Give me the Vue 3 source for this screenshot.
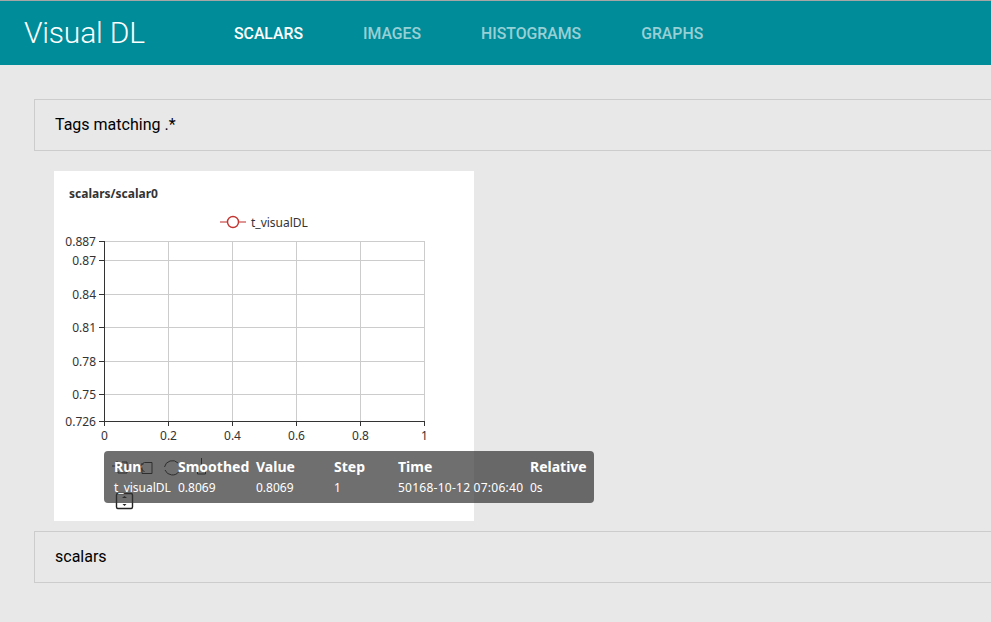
<template>
  <div class="page">
    <header class="topbar">
      <div class="logo">Visual DL</div>
      <nav class="nav">
        <a
          v-for="item in navItems"
          :key="item"
          class="nav-item"
          :class="{ active: item === 'SCALARS' }"
        >{{ item }}</a>
      </nav>
    </header>

    <main class="content">
      <div class="panel">Tags matching .*</div>

      <section class="card">
        <div class="card-title">scalars/scalar0</div>
        <svg class="chart" width="420" height="350" viewBox="0 0 420 350">
          <!-- legend -->
          <line x1="166" y1="51" x2="192" y2="51" stroke="#c23531" stroke-width="1.5" opacity="0.7" />
          <circle cx="179" cy="51" r="5.5" fill="#fff" stroke="#c23531" stroke-width="1.4" />
          <text x="197" y="56" class="legend">t_visualDL</text>

          <!-- grid -->
          <line
            v-for="x in xTicks"
            :key="'gx' + x.label"
            :x1="x.pos" y1="70" :x2="x.pos" y2="250"
            stroke="#ccc"
          />
          <line
            v-for="y in yTicks"
            :key="'gy' + y.label"
            x1="50" :y1="y.pos" x2="370" :y2="y.pos"
            stroke="#ccc"
          />

          <!-- axes -->
          <line x1="50.5" y1="70" x2="50.5" y2="250" stroke="#333" />
          <line x1="50" y1="250.5" x2="371" y2="250.5" stroke="#333" />
          <line
            v-for="y in yTicks"
            :key="'ty' + y.label"
            x1="45" :y1="y.pos" x2="50" :y2="y.pos"
            stroke="#333"
          />
          <line
            v-for="x in xTicks"
            :key="'tx' + x.label"
            :x1="x.pos" y1="250" :x2="x.pos" y2="255"
            stroke="#333"
          />
          <text
            v-for="y in yTicks"
            :key="'ly' + y.label"
            x="42" :y="y.pos + 4"
            text-anchor="end"
            class="tick"
          >{{ y.label }}</text>
          <text
            v-for="x in xTicks"
            :key="'lx' + x.label"
            :x="x.pos" y="269"
            text-anchor="middle"
            class="tick"
          >{{ x.label }}</text>

          <!-- toolbox, sits under the tooltip -->
          <g fill="none" stroke="#222" stroke-width="1">
            <path d="M58 295h10M63 290v10M68 291h5v11h-9v-2" />
            <path d="M85.500 296l5-5M85.500 296l5 5M87 293h2.500M90.500 291.500h7.500v11h-10v-6" />
            <path d="M124 292a8 8 0 0 0-13.500 4M111 299a8 8 0 0 0 14 1.500" />
            <path d="M143.500 296v7h8v-7M147.500 287v12" />
          </g>
          <rect x="62.500" y="322.500" width="16" height="15" rx="1.500" fill="#fff" stroke="#222" stroke-width="1.4" />
          <path d="M68 327h5l-2.500-2zM68.500 333h4l-2 2z" fill="#222" />
        </svg>

        <div class="tooltip">
          <table>
            <tr>
              <th v-for="col in tooltipHead" :key="col">{{ col }}</th>
            </tr>
            <tr>
              <td v-for="(cell, i) in tooltipRow" :key="i">{{ cell }}</td>
            </tr>
          </table>
        </div>
      </section>

      <div class="panel">scalars</div>
    </main>
  </div>
</template>

<script setup>
const navItems = ['SCALARS', 'IMAGES', 'HISTOGRAMS', 'GRAPHS']

const xTicks = [
  { label: '0', pos: 50.5 },
  { label: '0.2', pos: 114.5 },
  { label: '0.4', pos: 178.5 },
  { label: '0.6', pos: 242.5 },
  { label: '0.8', pos: 306.5 },
  { label: '1', pos: 370.5 }
]

const yTicks = [
  { label: '0.887', pos: 70.5 },
  { label: '0.87', pos: 89.5 },
  { label: '0.84', pos: 123.5 },
  { label: '0.81', pos: 156.5 },
  { label: '0.78', pos: 190.5 },
  { label: '0.75', pos: 223.5 },
  { label: '0.726', pos: 250.5 }
]

const tooltipHead = ['Run', 'Smoothed', 'Value', 'Step', 'Time', 'Relative']
const tooltipRow = ['t_visualDL', '0.8069', '0.8069', '1', '50168-10-12 07:06:40', '0s']
</script>

<style scoped>
.page {
  width: 991px;
  height: 622px;
  overflow: hidden;
  background: #e8e8e8;
  font-family: Roboto, "Liberation Sans", sans-serif;
}

.topbar {
  height: 64px;
  border-top: 1px solid #a6a6a6;
  background: #008c99;
  display: flex;
  align-items: center;
}

.logo {
  width: 234px;
  padding-left: 24px;
  padding-bottom: 2px;
  box-sizing: border-box;
  font-size: 30px;
  font-weight: 300;
  color: #fff;
  letter-spacing: -0.2px;
}

.nav {
  display: flex;
  gap: 60px;
}

.nav-item {
  font-size: 15.800px;
  font-weight: 500;
  color: rgba(255, 255, 255, 0.6);
}

.nav-item.active {
  color: #fff;
}

.content {
  padding: 34px 0 0 34px;
}

.panel {
  width: 1000px;
  height: 52px;
  box-sizing: border-box;
  border: 1px solid #ccc;
  padding-left: 20px;
  line-height: 50px;
  font-size: 16px;
  color: #000;
}

.card {
  position: relative;
  width: 420px;
  height: 350px;
  margin: 20px 0 10px 20px;
  background: #fff;
}

.card-title {
  position: absolute;
  left: 15px;
  top: 14px;
  font-family: "Noto Sans", sans-serif;
  font-size: 12px;
  font-weight: 700;
  color: #333;
}

.chart {
  display: block;
}

.legend,
.tick {
  font-family: "Noto Sans", sans-serif;
  font-size: 12px;
  fill: #333;
}

.tooltip {
  position: absolute;
  left: 50px;
  top: 280px;
  width: 490px;
  height: 52px;
  box-sizing: border-box;
  padding: 6px 10px;
  border-radius: 4px;
  background: rgba(50, 50, 50, 0.7);
  color: #fff;
  font-family: "Noto Sans", sans-serif;
  font-size: 12px;
}

.tooltip table {
  border-collapse: collapse;
  table-layout: fixed;
  width: 470px;
}

.tooltip th,
.tooltip td {
  padding: 0;
  text-align: left;
  white-space: nowrap;
}

.tooltip th {
  font-size: 14px;
  line-height: 20px;
}

.tooltip td {
  padding-top: 2px;
  line-height: 18px;
}

.tooltip td:nth-child(5) {
  letter-spacing: 0.25px;
}

.tooltip th:nth-child(1) { width: 64px; }
.tooltip th:nth-child(2) { width: 78px; }
.tooltip th:nth-child(3) { width: 78px; }
.tooltip th:nth-child(4) { width: 64px; }
.tooltip th:nth-child(5) { width: 132px; }
</style>

<style>
html, body {
  margin: 0;
  overflow: hidden;
}
</style>
